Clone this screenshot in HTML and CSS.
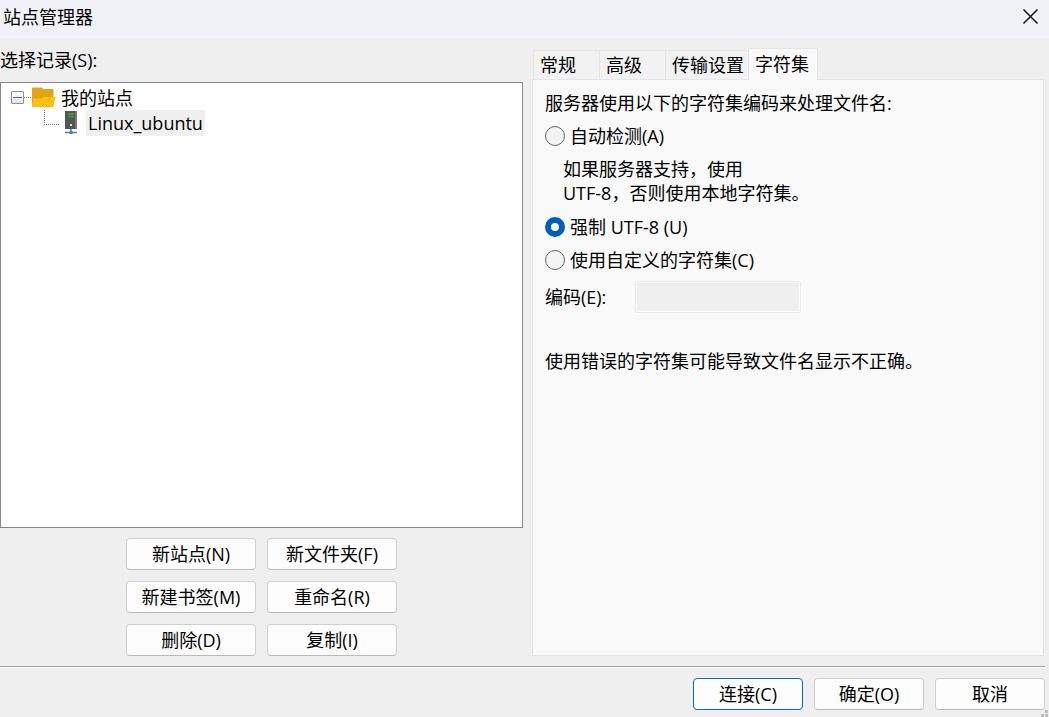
FILE: index.html
```
<!DOCTYPE html>
<html lang="zh-CN">
<head>
  <meta charset="UTF-8" />
  <title>站点管理器</title>
  <link rel="stylesheet" href="styles.css">
</head>
<body>

<!-- Title bar -->
<header class="titlebar">
  <h1>站点管理器</h1>
  <button type="button" class="close" aria-label="关闭">
    <svg width="17" height="17" viewBox="0 0 17 17"><path d="M1.5 1.5l14 14M15.5 1.5l-14 14" stroke="#111" stroke-width="1.5" fill="none"/></svg>
  </button>
</header>

<main>
  <!-- Site list -->
  <section class="sites">
    <h2 class="sites-label">选择记录(S):</h2>
    <ul class="tree">
      <li>
        <div class="node">
          <button type="button" class="toggle" aria-label="折叠"></button>
          <span class="branch"></span>
          <svg class="folder" width="25" height="22" viewBox="0 0 25 22">
            <path d="M1 1.5Q1 .5 2 .5h8.500l2 1.500h9q1 0 1 1v16H1z" fill="#e3a414"/>
            <path d="M1 19.500L2 11.500h8l3-1.500h11.500L22.500 19q0 1-1 1H2q-1 0-1-.5z" fill="#fdbf10"/>
          </svg>
          <span class="name">我的站点</span>
        </div>
        <ul>
          <li class="node">
            <span class="elbow"></span>
            <svg class="server" width="14" height="24" viewBox="0 0 14 24">
              <rect x="1" y="0" width="12" height="18" fill="#777"/>
              <rect x="1" y="0" width="10" height="18" fill="#555"/>
              <path d="M4 3h6M4 5.500h6" stroke="#2fae35" stroke-width="1.500"/>
              <rect x="6" y="13" width="2" height="2" fill="#ddd"/>
              <path d="M7 18v3M1 21.500h12" stroke="#777" stroke-width="1.500"/>
              <path d="M5 21.500h4M7 20v3" stroke="#2b86d1" stroke-width="2"/>
            </svg>
            <span class="name selected">Linux_ubuntu</span>
          </li>
        </ul>
      </li>
    </ul>
    <div class="site-buttons">
      <button type="button">新站点(N)</button>
      <button type="button">新文件夹(F)</button>
      <button type="button">新建书签(M)</button>
      <button type="button">重命名(R)</button>
      <button type="button">删除(D)</button>
      <button type="button">复制(I)</button>
    </div>
  </section>

  <!-- Settings -->
  <section class="settings">
    <div class="tabs" role="tablist">
      <button type="button" role="tab" class="tab">常规</button>
      <button type="button" role="tab" class="tab">高级</button>
      <button type="button" role="tab" class="tab wide">传输设置</button>
      <button type="button" role="tab" class="tab active" aria-selected="true">字符集</button>
    </div>
    <form class="panel" role="tabpanel">
      <p>服务器使用以下的字符集编码来处理文件名:</p>
      <label class="radio"><input type="radio" name="charset">自动检测(A)</label>
      <p class="hint">如果服务器支持，使用<br>UTF-8，否则使用本地字符集。</p>
      <label class="radio"><input type="radio" name="charset" checked>强制 UTF-8 (U)</label>
      <label class="radio"><input type="radio" name="charset">使用自定义的字符集(C)</label>
      <div class="field">
        <label for="encoding">编码(E):</label>
        <input type="text" id="encoding" disabled>
      </div>
      <p class="warning">使用错误的字符集可能导致文件名显示不正确。</p>
    </form>
  </section>
</main>

<!-- Dialog buttons -->
<footer>
  <button type="button" class="default">连接(C)</button>
  <button type="button">确定(O)</button>
  <button type="button">取消</button>
  <svg class="grip" width="9" height="7" viewBox="0 0 9 7"><path d="M5 0h3v3h-3zM1 4h3v3h-3zM5 4h3v3h-3z" fill="#bbb"/></svg>
</footer>

</body>
</html>
```
FILE: styles.css
```
* {
  box-sizing: border-box;
}
body {
  margin: 0;
  min-height: 100vh;
  display: flex;
  flex-direction: column;
  background: #efefef;
  color: #000;
  font-family: "Open Sans", "Noto Sans CJK SC", sans-serif;
  font-size: 18px;
  line-height: 24px;
}
h1, h2, p, ul {
  margin: 0;
  padding: 0;
  font-size: 18px;
  font-weight: normal;
  list-style: none;
}
button, input {
  font: inherit;
  color: inherit;
}
svg {
  display: block;
  flex: none;
}

.titlebar {
  display: flex;
  justify-content: space-between;
  align-items: center;
  height: 39px;
  padding: 0 10px 6px 3px;
  background: #f0f2f8;
}
.close {
  padding: 0;
  border: 0;
  background: none;
}

main {
  flex: 1;
  display: grid;
  grid-template-columns: 523fr 512fr;
  gap: 9px;
  padding: 9px 5px 10px 0;
}

/* Site list */
.sites {
  display: flex;
  flex-direction: column;
}
.sites-label {
  height: 34px;
}
.tree {
  flex: 1;
  padding: 2px 0 0 10px;
  background: #fff;
  border: 1px solid #828790;
}
.node {
  display: flex;
  align-items: center;
  height: 25px;
}
.toggle {
  width: 13px;
  height: 13px;
  padding: 0;
  border: 1px solid #919191;
  border-radius: 1px;
  background: linear-gradient(#4b63a7, #4b63a7) center / 9px 1px no-repeat, linear-gradient(#fff, #e4e4e4);
}
.branch {
  width: 7px;
  border-top: 1px dotted #777;
}
.name {
  margin-left: 3px;
  padding: 0 2px;
  line-height: 26px;
}
.elbow {
  width: 15px;
  height: 15px;
  margin: 0 5px 0 33px;
  align-self: flex-start;
  border-left: 1px dotted #777;
  border-bottom: 1px dotted #777;
}
.selected {
  margin-left: 8px;
  background: #f0f0f0;
}
.site-buttons {
  display: grid;
  grid-template-columns: 130px 130px;
  justify-content: center;
  gap: 11px;
  padding-top: 10px;
}
.site-buttons button, footer button {
  height: 32px;
  padding: 0;
  background: #fdfdfd;
  border: 1px solid #d0d0d0;
  border-bottom-color: #bababa;
  border-radius: 4px;
}

/* Settings */
.settings {
  display: flex;
  flex-direction: column;
}
.tabs {
  display: flex;
  align-items: flex-end;
  padding-left: 1px;
}
.tab {
  width: 66px;
  height: 29px;
  padding: 0 0 0 6px;
  text-align: left;
  background: #f2f2f2;
  border: 1px solid #e5e5e5;
  border-width: 1px 0 0 1px;
}
.wide {
  width: 83px;
}
.active {
  width: 70px;
  height: 32px;
  margin-bottom: -1px;
  padding-bottom: 2px;
  background: #f9f9f9;
  border-right-width: 1px;
  border-radius: 2px 2px 0 0;
  z-index: 1;
}
.panel {
  flex: 1;
  display: flex;
  flex-direction: column;
  gap: 9px;
  padding: 11px 12px;
  background: #f9f9f9;
  border: 1px solid #e5e5e5;
}
.radio {
  display: flex;
  align-items: center;
  gap: 5px;
}
.radio input {
  appearance: none;
  width: 20px;
  height: 20px;
  margin: 0;
  border: 1px solid #666;
  border-radius: 50%;
  background: #f3f3f3;
}
.radio input:checked {
  border: 6px solid #005fb8;
  background: #fff;
}
.hint {
  padding: 0 0 1px 18px;
}
.field {
  display: flex;
  align-items: center;
}
.field label {
  width: 90px;
}
.field input {
  width: 166px;
  height: 32px;
  padding: 0 6px;
  background: #efefef;
  border: 1px solid #ebebeb;
  border-radius: 2px;
  box-shadow: inset 0 0 0 1px #fbfbfb;
}
.warning {
  margin-top: 27px;
}

/* Dialog buttons */
footer {
  position: relative;
  display: flex;
  justify-content: flex-end;
  gap: 11px;
  padding: 12px 4px 7px;
}
footer::before {
  content: "";
  position: absolute;
  top: 0;
  left: 0;
  right: 4px;
  border-top: 1px solid #a0a0a0;
  border-bottom: 1px solid #fff;
}
footer button {
  width: 110px;
}
footer .default {
  border-color: #0070c8;
}
.grip {
  position: absolute;
  right: 0;
  bottom: 0;
}
```
